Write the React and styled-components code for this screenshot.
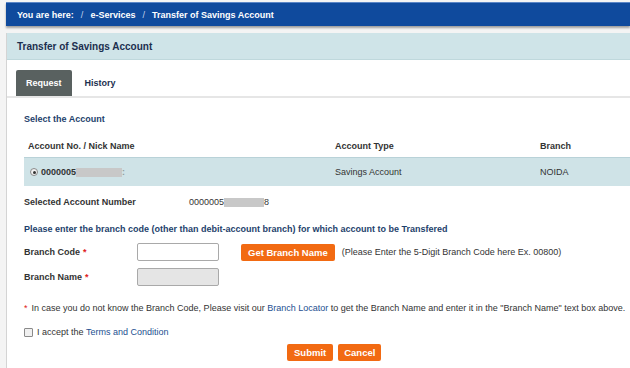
import React from "react";
import styled, { createGlobalStyle } from "styled-components";

const GlobalStyle = createGlobalStyle`
  html, body {
    margin: 0;
    padding: 0;
    background: #ffffff;
    font-family: "Liberation Sans", Arial, sans-serif;
  }
`;

const Page = styled.div`
  width: 630px;
  height: 368px;
  overflow: hidden;
  padding: 2px 0 0 6px;
  box-sizing: border-box;
  background: #f4f4f4;
`;

const Crumbs = styled.div`
  height: 23px;
  background: #0f4a9d;
  border-top: 1px solid #5b86c6;
  box-shadow: 0 2px 2px rgba(0, 0, 0, 0.35);
  display: flex;
  align-items: center;
  padding-left: 11px;
  gap: 5px;
  color: #ffffff;
  font-size: 9px;
  font-weight: bold;
`;

const Sep = styled.span`
  font-weight: normal;
  color: #c8d6ee;
  margin: 0 2px;
`;

const Panel = styled.div`
  margin-top: 7px;
  background: #ffffff;
  border-left: 1px solid #d4d4d4;
  height: 340px;
`;

const PanelHead = styled.div`
  height: 26px;
  background: #cfe4e8;
  border-bottom: 1px solid #bfd8dc;
  display: flex;
  align-items: center;
  padding-left: 10px;
  color: #1c2f4f;
  font-size: 10px;
  font-weight: bold;
`;

const Tabs = styled.div`
  display: flex;
  align-items: flex-end;
  padding: 10px 0 0 9px;
  border-bottom: 2px solid #e6e6e6;
`;

const Tab = styled.div`
  height: 26px;
  padding: 0 ${({ $active }) => ($active ? "10px" : "13px")};
  display: flex;
  align-items: center;
  font-size: 9px;
  font-weight: bold;
  color: ${({ $active }) => ($active ? "#ffffff" : "#1c2f4f")};
  background: ${({ $active }) => ($active ? "#596160" : "transparent")};
  border-radius: 2px 2px 0 0;
`;

const Body = styled.div`
  padding: 0 0 0 17px;
  font-size: 9px;
  color: #333333;
`;

const SectionTitle = styled.div`
  font-weight: bold;
  color: #1e3f6c;
  padding: ${({ $pad }) => $pad};
`;

const Table = styled.div`
  margin-top: 11px;
`;

const Row = styled.div`
  display: grid;
  grid-template-columns: 307px 205px 1fr;
  align-items: center;
  height: ${({ $h }) => $h};
  padding-left: 4px;
  background: ${({ $bg }) => $bg || "transparent"};
  font-weight: ${({ $bold }) => ($bold ? "bold" : "normal")};
  color: #333333;
  border-top: ${({ $line }) => ($line ? "1px solid #b9d2d8" : "none")};
`;

const AcctCell = styled.div`
  display: flex;
  align-items: center;
  font-weight: bold;
`;

const Radio = styled.span`
  width: 6px;
  height: 6px;
  border-radius: 50%;
  border: 1px solid #8a8a8a;
  background: #f2f2f2;
  margin: 0 3px 0 2px;
  position: relative;
  &::after {
    content: "";
    position: absolute;
    left: 1.5px;
    top: 1.5px;
    width: 3px;
    height: 3px;
    border-radius: 50%;
    background: #333;
  }
`;

const Mask = styled.span`
  display: inline-block;
  width: ${({ $w }) => $w}px;
  height: 9px;
  background: #c8c8c8;
`;

const Faint = styled.span`
  opacity: 0.4;
`;

const InfoRow = styled.div`
  display: flex;
  align-items: center;
  height: 32px;
`;

const Label = styled.div`
  width: 165px;
  font-weight: bold;
`;

const Value = styled.div`
  display: flex;
  align-items: center;
`;

const FormRow = styled.div`
  display: flex;
  align-items: center;
  height: ${({ $h }) => $h};
`;

const FieldLabel = styled.div`
  width: 113px;
  font-weight: bold;
`;

const Star = styled.span`
  color: #e02020;
  margin: ${({ $m }) => $m || "0 0 0 3px"};
`;

const TextInput = styled.div`
  width: 82px;
  height: 18px;
  box-sizing: border-box;
  border: 1px solid #a9a9a9;
  border-radius: 2px;
  background: ${({ $disabled }) => ($disabled ? "#e5e5e5" : "#ffffff")};
`;

const OrangeButton = styled.button`
  font-family: "Liberation Sans", Arial, sans-serif;
  font-size: 9.5px;
  font-weight: bold;
  color: #ffffff;
  background: #f26a12;
  border: none;
  border-radius: 2px;
  height: 17px;
  padding: 0 ${({ $px }) => $px || "7px"};
  margin-left: ${({ $ml }) => $ml || "0"};
  cursor: pointer;
`;

const Hint = styled.span`
  margin-left: 7px;
`;

const Note = styled.div`
  padding: 13px 0 0 0;
  display: flex;
  align-items: center;
  height: 12px;
`;

const Link = styled.span`
  color: #1d4f91;
`;

const Check = styled.span`
  width: 7px;
  height: 7px;
  border: 1px solid #8a8a8a;
  background: #f0f0f0;
  border-radius: 1px;
  margin-right: 4px;
`;

const Accept = styled.div`
  display: flex;
  align-items: center;
  margin-top: 13px;
`;

const Actions = styled.div`
  display: flex;
  padding-left: 263px;
  gap: 5px;
  margin-top: 7px;
`;

export default function App() {
  return (
    <>
      <GlobalStyle />
      <Page>
        <Crumbs>
          <span>You are here:</span>
          <Sep>/</Sep>
          <span>e-Services</span>
          <Sep>/</Sep>
          <span>Transfer of Savings Account</span>
        </Crumbs>
        <Panel>
          <PanelHead>Transfer of Savings Account</PanelHead>
          <Tabs>
            <Tab $active>Request</Tab>
            <Tab>History</Tab>
          </Tabs>
          <Body>
            <SectionTitle $pad="16px 0 0 0">Select the Account</SectionTitle>
            <Table>
              <Row $h="22px" $bold>
                <div>Account No. / Nick Name</div>
                <div>Account Type</div>
                <div>Branch</div>
              </Row>
              <Row $h="28px" $bg="#cfe3e7" $line>
                <AcctCell>
                  <Radio />
                  0000005
                  <Mask $w={46} />
                  <Faint>:</Faint>
                </AcctCell>
                <div>Savings Account</div>
                <div>NOIDA</div>
              </Row>
            </Table>
            <InfoRow>
              <Label>Selected Account Number</Label>
              <Value>
                0000005
                <Mask $w={40} />
                8
              </Value>
            </InfoRow>
            <SectionTitle $pad="6px 0 5px 0">
              Please enter the branch code (other than debit-account branch) for which account to be Transfered
            </SectionTitle>
            <FormRow $h="26px">
              <FieldLabel>
                Branch Code<Star>*</Star>
              </FieldLabel>
              <TextInput />
              <OrangeButton $ml="22px">Get Branch Name</OrangeButton>
              <Hint>(Please Enter the 5-Digit Branch Code here Ex. 00800)</Hint>
            </FormRow>
            <FormRow $h="24px">
              <FieldLabel>
                Branch Name<Star>*</Star>
              </FieldLabel>
              <TextInput $disabled />
            </FormRow>
            <Note>
              <Star $m="0 4px 0 0">*</Star>
              In case you do not know the Branch Code, Please visit our&nbsp;<Link>Branch Locator</Link>&nbsp;to get the Branch Name and enter it in the "Branch Name" text box above.
            </Note>
            <Accept>
              <Check />I accept the&nbsp;<Link>Terms and Condition</Link>
            </Accept>
            <Actions>
              <OrangeButton>Submit</OrangeButton>
              <OrangeButton $px="6px">Cancel</OrangeButton>
            </Actions>
          </Body>
        </Panel>
      </Page>
    </>
  );
}
